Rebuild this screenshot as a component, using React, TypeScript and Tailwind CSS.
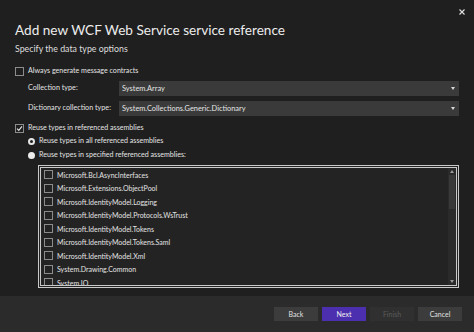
import React from 'react';

const ASSEMBLIES = [
  'Microsoft.Bcl.AsyncInterfaces',
  'Microsoft.Extensions.ObjectPool',
  'Microsoft.IdentityModel.Logging',
  'Microsoft.IdentityModel.Protocols.WsTrust',
  'Microsoft.IdentityModel.Tokens',
  'Microsoft.IdentityModel.Tokens.Saml',
  'Microsoft.IdentityModel.Xml',
  'System.Drawing.Common',
  'System.IO',
];

function Box({ checked }: { checked?: boolean }) {
  return (
    <span className="w-[9px] h-[9px] border border-[#8c8c8c] flex items-center justify-center shrink-0">
      {checked && (
        <svg width="7" height="7" viewBox="0 0 7 7">
          <path d="M1 3.6 L2.8 5.4 L6 1.4" stroke="#e8e8e8" strokeWidth="1.1" fill="none" />
        </svg>
      )}
    </span>
  );
}

function Dropdown({ label, value }: { label: string; value: string }) {
  return (
    <div className="flex items-center h-[15px]">
      <span className="w-[104px] pl-[13px] text-[7.2px] whitespace-nowrap">{label}</span>
      <div className="flex-1 h-full bg-[#3a3a3a] flex items-center justify-between pl-[3px] pr-[4px] text-[7.4px]">
        <span>{value}</span>
        <svg width="4" height="3" viewBox="0 0 4 3">
          <path d="M0 0 H4 L2 3 Z" fill="#d8d8d8" />
        </svg>
      </div>
    </div>
  );
}

export default function App() {
  return (
    <div className="w-[474px] h-[332px] bg-[#1f1f1f] text-[#e4e4e4] flex flex-col relative overflow-hidden font-['Lato',sans-serif]">
      <svg className="absolute left-[459px] top-[9px]" width="6" height="6" viewBox="0 0 6 6">
        <path d="M0.5 0.5 L5.5 5.5 M5.5 0.5 L0.5 5.5" stroke="#e0e0e0" strokeWidth="1.1" />
      </svg>

      <div className="flex-1 flex flex-col pl-[15px] pr-[15px] pt-[19px]">
        <h1 className="text-[13.6px] leading-[22px] text-[#ececec]">Add new WCF Web Service service reference</h1>
        <p className="text-[8.8px] leading-[14px] mt-[1px] text-[#dedede]">Specify the data type options</p>

        <label className="mt-[8px] h-[14px] flex items-center gap-[4px] text-[7.1px]">
          <Box />
          <span>Always generate message contracts</span>
        </label>

        <div className="mt-[3px]">
          <Dropdown label="Collection type:" value="System.Array" />
        </div>
        <div className="mt-[5px]">
          <Dropdown label="Dictionary collection type:" value="System.Collections.Generic.Dictionary" />
        </div>

        <label className="mt-[6px] h-[13px] flex items-center gap-[4px] text-[7.1px]">
          <Box checked />
          <span>Reuse types in referenced assemblies</span>
        </label>
        <label className="h-[13px] flex items-center gap-[4px] pl-[13px] text-[7.1px]">
          <span className="w-[7px] h-[7px] rounded-full border-2 border-[#e6e6e6] bg-[#1f1f1f]" />
          <span>Reuse types in all referenced assemblies</span>
        </label>
        <label className="mt-[1px] h-[13px] flex items-center gap-[4px] pl-[13px] text-[7.1px]">
          <span className="w-[7px] h-[7px] rounded-full bg-[#ececec]" />
          <span>Reuse types in specified referenced assemblies:</span>
        </label>

        <div className="mt-[3px] ml-[23px] h-[123px] border-[3px] border-double border-[#c9c9c9] bg-[#232323] flex overflow-hidden">
          <div className="flex-1 flex flex-col pl-[3px]">
            {ASSEMBLIES.map((a) => (
              <div key={a} className="h-[13.5px] shrink-0 flex items-center gap-[4px] text-[7px]">
                <Box />
                <span>{a}</span>
              </div>
            ))}
          </div>
          <div className="w-[8px] bg-[#2a2a2a] flex flex-col items-center justify-between py-[2px]">
            <svg width="4" height="3" viewBox="0 0 4 3">
              <path d="M0 3 H4 L2 0 Z" fill="#9a9a9a" />
            </svg>
            <div className="w-[6px] h-[34px] bg-[#383838] mb-auto mt-[2px]" />
            <svg width="4" height="3" viewBox="0 0 4 3">
              <path d="M0 0 H4 L2 3 Z" fill="#9a9a9a" />
            </svg>
          </div>
        </div>
      </div>

      <div className="h-[36px] bg-[#2b2b2b] flex items-center justify-end gap-[4px] pr-[12px]">
        <button className="w-[44px] h-[14px] bg-[#3c3c3c] text-[7px] text-[#e0e0e0]">Back</button>
        <button className="w-[44px] h-[14px] bg-[#4b2fae] text-[7px] text-[#f0f0f0]">Next</button>
        <button className="w-[44px] h-[14px] bg-[#303030] text-[7px] text-[#5c5c5c]">Finish</button>
        <button className="w-[44px] h-[14px] bg-[#3c3c3c] text-[7px] text-[#e0e0e0]">Cancel</button>
      </div>
    </div>
  );
}
